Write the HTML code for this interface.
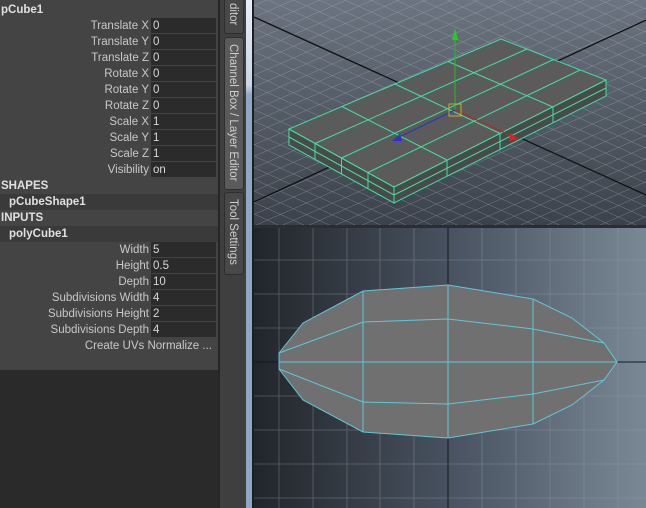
<!DOCTYPE html>
<html><head><meta charset="utf-8"><style>
*{margin:0;padding:0;box-sizing:border-box}
body{width:646px;height:508px;overflow:hidden;background:#2b2b2b;font-family:"Liberation Sans",sans-serif;font-size:11.5px;position:relative}
#left{position:absolute;left:0;top:0;width:218px;height:370px;background:#444}
#below{position:absolute;left:0;top:370px;width:218px;height:138px;background:#2a2a2a}
.row{position:absolute;left:0;width:218px;height:16px;line-height:16px}
.lab{position:absolute;right:69px;color:#c8c8c8;white-space:nowrap}
.val{position:absolute;left:151px;width:65px;height:15px;background:#2b2b2b;color:#d8d8d8;padding-left:2px}
.hdr{color:#e0e0e0;font-weight:bold;padding-left:1px}
.sub{background:#3a3a3a;padding-left:9px}
#strip{position:absolute;left:218px;top:0;width:28px;height:508px;background:#3f3f3f;border-left:2px solid #262626}
.tab{position:absolute;left:4px;width:20px;border-radius:3px;background:#484848;border:1px solid #2e2e2e;color:#cfcfcf}
.tab span{position:absolute;left:2px;top:6px;writing-mode:vertical-rl;white-space:nowrap;font-size:11.5px}
#bar{position:absolute;left:246px;top:0;width:6px;height:508px;background:linear-gradient(#e8eef6 0,#c8d6e8 85px,#8ea7c6 95px,#8ea7c6 100%)}
#sep{position:absolute;left:252px;top:0;width:2px;height:508px;background:#1e1e1e}
</style></head><body>
<div id="left">
<div class="row hdr" style="top:2px">pCube1</div>
<div class="row" style="top:18px"><span class="lab">Translate X</span><span class="val">0</span></div>
<div class="row" style="top:34px"><span class="lab">Translate Y</span><span class="val">0</span></div>
<div class="row" style="top:50px"><span class="lab">Translate Z</span><span class="val">0</span></div>
<div class="row" style="top:66px"><span class="lab">Rotate X</span><span class="val">0</span></div>
<div class="row" style="top:82px"><span class="lab">Rotate Y</span><span class="val">0</span></div>
<div class="row" style="top:98px"><span class="lab">Rotate Z</span><span class="val">0</span></div>
<div class="row" style="top:114px"><span class="lab">Scale X</span><span class="val">1</span></div>
<div class="row" style="top:130px"><span class="lab">Scale Y</span><span class="val">1</span></div>
<div class="row" style="top:146px"><span class="lab">Scale Z</span><span class="val">1</span></div>
<div class="row" style="top:162px"><span class="lab">Visibility</span><span class="val">on</span></div>
<div class="row hdr" style="top:178px">SHAPES</div>
<div class="row hdr sub" style="top:194px">pCubeShape1</div>
<div class="row hdr" style="top:210px">INPUTS</div>
<div class="row hdr sub" style="top:226px">polyCube1</div>
<div class="row" style="top:242px"><span class="lab">Width</span><span class="val">5</span></div>
<div class="row" style="top:258px"><span class="lab">Height</span><span class="val">0.5</span></div>
<div class="row" style="top:274px"><span class="lab">Depth</span><span class="val">10</span></div>
<div class="row" style="top:290px"><span class="lab">Subdivisions Width</span><span class="val">4</span></div>
<div class="row" style="top:306px"><span class="lab">Subdivisions Height</span><span class="val">2</span></div>
<div class="row" style="top:322px"><span class="lab">Subdivisions Depth</span><span class="val">4</span></div>
<div class="row" style="top:338px"><span class="lab" style="right:6px">Create UVs Normalize ...</span></div>
</div>
<div id="below"></div>
<div id="strip">
<div class="tab" style="top:-4px;height:38px"><span style="top:6px">ditor</span></div>
<div class="tab" style="top:37px;height:153px;background:#5a5a5a"><span>Channel Box / Layer Editor</span></div>
<div class="tab" style="top:192px;height:83px"><span>Tool Settings</span></div>
</div>
<div id="bar"></div><div id="sep"></div>
<svg style="position:absolute;left:0;top:0" width="646" height="508">
<defs>
<linearGradient id="g1" x1="0" y1="0" x2="0" y2="1"><stop offset="0" stop-color="#6b7480"/><stop offset="1" stop-color="#3b424b"/></linearGradient>
<linearGradient id="g2" x1="0" y1="0" x2="1" y2="0"><stop offset="0" stop-color="#22262b"/><stop offset="0.5" stop-color="#485260"/><stop offset="1" stop-color="#7a8896"/></linearGradient>
<pattern id="p1" patternUnits="userSpaceOnUse" width="1" height="1" patternTransform="matrix(13,5.9,13,-5.7,254,17)">
<path d="M0 0H1M0 0V1" stroke="#b0b8c2" stroke-width="0.07" fill="none" opacity="0.6"/></pattern>
<clipPath id="c1"><rect x="254" y="0" width="392" height="225"/></clipPath>
</defs>
<rect x="254" y="0" width="392" height="225" fill="url(#g1)"/>
<rect x="254" y="0" width="392" height="225" fill="url(#p1)"/>
<g clip-path="url(#c1)" stroke="#111" stroke-width="1.3">
<line x1="254" y1="17" x2="646" y2="195"/><line x1="254" y1="202" x2="646" y2="20"/>
</g>
<rect x="254" y="225" width="392" height="3" fill="#2a2d31"/>
<g stroke="#3ee0a0" stroke-width="1" fill="#555">
<polygon points="289,129 394,187 394,203 289,145" fill="#4a4a4a"/>
<polygon points="394,187 606,80 606,96 394,203" fill="#4a4a4a"/>
<polygon points="289,129 501,39 606,80 394,187" fill="#5c5b5b"/>
<path fill="none" d="M289,137 394,195 606,88 M315,143.5 527,49 M341.5,158 553.5,59.5 M368,172.5 580,70 M342,106.5 447,160 M395,84 500,133.5 M448,61.5 553,107 M315,143.5V159.5 M341.5,158V174 M368,172.5V188.5 M447,160V176 M500,133.5V149.5 M553,107V123"/>
</g>
<g stroke-width="1">
<line x1="455" y1="110" x2="455" y2="38" stroke="#20c020"/><polygon points="452,40 458,40 455,28" fill="#20d020"/>
<line x1="455" y1="110" x2="395" y2="139" stroke="#3030c0"/><polygon points="392,141 400,134 402,141" fill="#3030d0"/>
<line x1="455" y1="110" x2="512" y2="136" stroke="#c02020"/><polygon points="518,139 510,133 509,141" fill="#e02020"/>
<rect x="449" y="104" width="12" height="12" fill="none" stroke="#c0b020"/>
</g>
<rect x="254" y="228" width="392" height="280" fill="url(#g2)"/>
<g stroke="#9a9ea4" stroke-width="0.8" opacity="0.45">
<path d="M279,228V508M313,228V508M347,228V508M380,228V508M414,228V508M482,228V508M516,228V508M550,228V508M584,228V508M618,228V508M254,260H646M254,294H646M254,328H646M254,396H646M254,430H646M254,464H646M254,498H646"/>
</g>
<path d="M448,228V508M254,362H646" stroke="#15181b" stroke-width="1"/>
<polygon fill="#707070" stroke="#5ec8d8" stroke-width="1" points="279,353 303,323 363,291 448,285 533,299 572,318 604,343 617,362 604,380 572,405 533,424 448,438 363,432 303,400 279,369"/>
<path fill="none" stroke="#5ec8d8" stroke-width="1" d="M279,353 363,322 448,319 533,329 604,343 M279,369 363,402 448,404 533,394 604,380 M279,362H617 M363,291V432 M448,285V438 M533,299V424"/>
</svg>
</body></html>
